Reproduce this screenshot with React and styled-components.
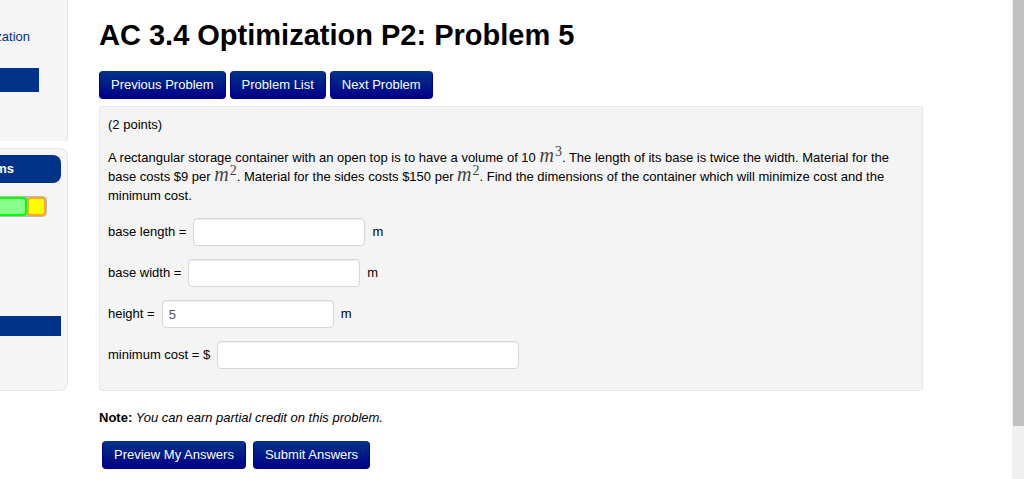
import { styled, createGlobalStyle } from "styled-components";

function App() {
  return (
    <Page>
      <GlobalStyle />
      <SideBar>
        <SidePanel $open>
          <CourseLink href="#course">zation</CourseLink>
          <SideBlock $right="28px" $height="24px" />
        </SidePanel>
        <SidePanel>
          <SideTitle>ms</SideTitle>
          <Progress>
            <Done />
            <Partial />
          </Progress>
          <SideBlock $right="6px" $height="20px" />
        </SidePanel>
      </SideBar>

      <Main>
        <Title>AC 3.4 Optimization P2: Problem 5</Title>
        <NavRow>
          <NavLink href="#previous">Previous Problem</NavLink>
          <NavLink href="#list">Problem List</NavLink>
          <NavLink href="#next">Next Problem</NavLink>
        </NavRow>

        <ProblemBox>
          <Points>(2 points)</Points>
          <Question>
            A rectangular storage container with an open top is to have a volume of 10 <Meters power="3" />. The
            length of its base is twice the width. Material for the base costs $9 per <Meters power="2" />. Material
            for the sides costs $150 per <Meters power="2" />. Find the dimensions of the container which will
            minimize cost and the minimum cost.
          </Question>
          <Answers>
            <Answer id="length" label="base length =" unit="m" />
            <Answer id="width" label="base width =" unit="m" />
            <Answer id="height" label="height =" unit="m" value="5" />
            <Answer id="cost" label="minimum cost = $" wide />
          </Answers>
        </ProblemBox>

        <Note>
          <b>Note:</b> <i>You can earn partial credit on this problem.</i>
        </Note>
        <SubmitRow>
          <Button type="button">Preview My Answers</Button>
          <Button type="button">Submit Answers</Button>
        </SubmitRow>
      </Main>

      <ScrollTrack>
        <ScrollThumb />
      </ScrollTrack>
    </Page>
  );
}

export default App;

function Meters({ power }) {
  return (
    <MathText>
      m<Power>{power}</Power>
    </MathText>
  );
}

function Answer({ id, label, unit, value, wide }) {
  return (
    <AnswerRow>
      <label htmlFor={id}>{label}</label>
      <AnswerInput id={id} type="text" defaultValue={value} $wide={wide} />
      {unit && <span>{unit}</span>}
    </AnswerRow>
  );
}

const GlobalStyle = createGlobalStyle`
  * {
    box-sizing: border-box;
  }
  body {
    margin: 0;
    overflow: hidden;
    background: #fff;
    color: #000;
    font-family: "Liberation Sans", Arial, sans-serif;
    font-size: 13px;
    line-height: 18px;
  }
`;

const Page = styled.div`
  display: flex;
  height: 100vh;
`;

const SideBar = styled.aside`
  flex: none;
  width: 68px;
  overflow: hidden;
`;

const SidePanel = styled.div`
  display: flex;
  flex-direction: column;
  align-items: flex-end;
  height: ${(props) => (props.$open ? "141px" : "243px")};
  margin-bottom: 7px;
  padding-top: ${(props) => (props.$open ? "28px" : "6px")};
  background-color: #f5f5f5;
  border: 1px solid #e6e6e6;
  border-width: ${(props) => (props.$open ? "0 1px 0 0" : "1px 1px 1px 0")};
  border-radius: ${(props) => (props.$open ? "0" : "0 8px 8px 0")};
`;

const CourseLink = styled.a`
  margin: 0 37px 22px 0;
  color: #038;
  text-decoration: none;
`;

const SideBlock = styled.div`
  width: 100%;
  height: ${(props) => props.$height};
  border-right: ${(props) => props.$right} solid #f5f5f5;
  background-color: #038;
`;

const SideTitle = styled.h2`
  display: flex;
  justify-content: flex-end;
  width: 61px;
  margin: 0 6px 13px 0;
  padding-right: 47px;
  background-color: #038;
  border-radius: 0 8px 8px 0;
  color: #fff;
  font-size: 13px;
  line-height: 28px;
`;

const Progress = styled.div`
  display: flex;
  width: 47px;
  height: 21px;
  margin: 0 20px 99px 0;
  padding: 1px 1px 1px 0;
  background-color: #bbb;
  border-radius: 0 5px 5px 0;
`;

const Done = styled.div`
  flex: 1;
  background-color: #8f8;
  border: 2px solid #0f0;
  border-left: 0;
  border-radius: 0 4px 4px 0;
`;

const Partial = styled.div`
  width: 19px;
  background-color: #ff0;
  border: 2px solid #ffa726;
  border-radius: 4px;
`;

const Main = styled.main`
  flex: 1;
  min-width: 0;
  padding: 15px 89px 0 31px;
`;

const Title = styled.h1`
  margin: 0 0 16px;
  font-size: 29px;
  line-height: 40px;
`;

const NavRow = styled.nav`
  display: flex;
  gap: 4px;
  margin-bottom: 7px;
`;

const Button = styled.button`
  height: 28px;
  padding: 0 11px;
  border: 1px solid #008;
  border-top-color: #038;
  border-radius: 4px;
  background: linear-gradient(#038, #008);
  color: #fff;
  font: inherit;
  line-height: 26px;
  text-decoration: none;
  white-space: nowrap;
`;

const NavLink = styled(Button).attrs({ as: "a" })``;

const ProblemBox = styled.section`
  padding: 9px 8px 21px;
  background-color: #f4f4f4;
  border: 1px solid #e8e8e8;
  border-radius: 3px;
`;

const Points = styled.div`
  margin-bottom: 14px;
`;

const Question = styled.p`
  margin: 0 0 13px;
  padding-right: 20px;
  line-height: 19px;
`;

const MathText = styled.span`
  color: #444;
  font-family: "Liberation Serif", serif;
  font-size: 20px;
  font-style: italic;
  line-height: 0;
`;

const Power = styled.sup`
  margin-left: 1px;
  font-size: 14px;
  font-style: normal;
  line-height: 0;
  vertical-align: 6px;
`;

const Answers = styled.div`
  display: flex;
  flex-direction: column;
  gap: 13px;
`;

const AnswerRow = styled.div`
  display: flex;
  align-items: center;
  gap: 7px;
  line-height: 26px;
`;

const AnswerInput = styled.input`
  width: ${(props) => (props.$wide ? "302px" : "172px")};
  height: 28px;
  padding: 0 6px;
  border: 1px solid #d6d6d6;
  border-radius: 4px;
  box-shadow: inset 0 1px 1px rgba(0, 0, 0, 0.07);
  background-color: #fff;
  color: #555;
  font: inherit;
`;

const Note = styled.p`
  margin: 18px 0 14px;
`;

const SubmitRow = styled.div`
  display: flex;
  gap: 7px;
  padding-left: 3px;
`;

const ScrollTrack = styled.div`
  flex: none;
  width: 12px;
  background-color: #f0f0f0;
`;

const ScrollThumb = styled.div`
  height: 89%;
  margin-left: 1px;
  background-color: #c1c1c1;
`;
